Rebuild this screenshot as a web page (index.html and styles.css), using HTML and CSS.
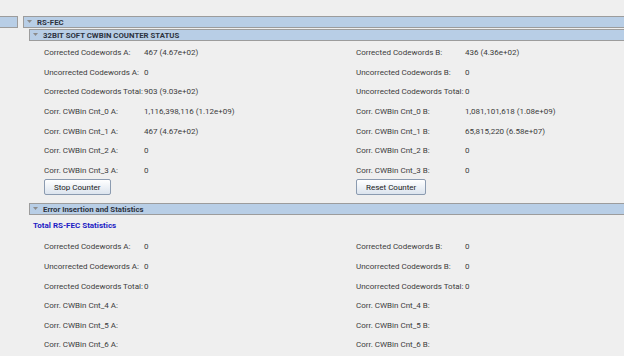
FILE: index.html
```html
<!DOCTYPE html>
<html lang="en">
<head>
    <meta charset="UTF-8">
    <title>RS-FEC</title>
    <link rel="stylesheet" href="styles.css">
</head>
<body>
    <div class="panelRow">
        <div class="stub"></div>
        <div class="panel">
            <div class="header">
                <svg class="arrow" width="5" height="3" viewBox="0 0 5 3"><polygon points="0,0 5,0 2.5,3" fill="#8c8c8c"/></svg>
                <span>RS-FEC</span>
            </div>

            <div class="section">
                <div class="header">
                    <svg class="arrow" width="5" height="3" viewBox="0 0 5 3"><polygon points="0,0 5,0 2.5,3" fill="#8c8c8c"/></svg>
                    <span>32BIT SOFT CWBIN COUNTER STATUS</span>
                </div>
                <div class="columns">
                    <div class="column">
                        <div class="grid left">
                            <div>Corrected Codewords A:</div><div>467 (4.67e+02)</div>
                            <div>Uncorrected Codewords A:</div><div>0</div>
                            <div>Corrected Codewords Total:</div><div>903 (9.03e+02)</div>
                            <div>Corr. CWBin Cnt_0 A:</div><div>1,116,398,116 (1.12e+09)</div>
                            <div>Corr. CWBin Cnt_1 A:</div><div>467 (4.67e+02)</div>
                            <div>Corr. CWBin Cnt_2 A:</div><div>0</div>
                            <div>Corr. CWBin Cnt_3 A:</div><div>0</div>
                        </div>
                        <button class="counterButton">Stop Counter</button>
                    </div>
                    <div class="column">
                        <div class="grid right">
                            <div>Corrected Codewords B:</div><div>436 (4.36e+02)</div>
                            <div>Uncorrected Codewords B:</div><div>0</div>
                            <div>Uncorrected Codewords Total:</div><div>0</div>
                            <div>Corr. CWBin Cnt_0 B:</div><div>1,081,101,618 (1.08e+09)</div>
                            <div>Corr. CWBin Cnt_1 B:</div><div>65,815,220 (6.58e+07)</div>
                            <div>Corr. CWBin Cnt_2 B:</div><div>0</div>
                            <div>Corr. CWBin Cnt_3 B:</div><div>0</div>
                        </div>
                        <button class="counterButton">Reset Counter</button>
                    </div>
                </div>
            </div>

            <div class="section errors">
                <div class="header">
                    <svg class="arrow" width="5" height="3" viewBox="0 0 5 3"><polygon points="0,0 5,0 2.5,3" fill="#8c8c8c"/></svg>
                    <span>Error Insertion and Statistics</span>
                </div>
                <div class="totalTitle">Total RS-FEC Statistics</div>
                <div class="columns">
                    <div class="column">
                        <div class="grid left">
                            <div>Corrected Codewords A:</div><div>0</div>
                            <div>Uncorrected Codewords A:</div><div>0</div>
                            <div>Corrected Codewords Total:</div><div>0</div>
                            <div>Corr. CWBin Cnt_4 A:</div><div></div>
                            <div>Corr. CWBin Cnt_5 A:</div><div></div>
                            <div>Corr. CWBin Cnt_6 A:</div><div></div>
                        </div>
                    </div>
                    <div class="column">
                        <div class="grid right">
                            <div>Corrected Codewords B:</div><div>0</div>
                            <div>Uncorrected Codewords B:</div><div>0</div>
                            <div>Uncorrected Codewords Total:</div><div>0</div>
                            <div>Corr. CWBin Cnt_4 B:</div><div></div>
                            <div>Corr. CWBin Cnt_5 B:</div><div></div>
                            <div>Corr. CWBin Cnt_6 B:</div><div></div>
                        </div>
                    </div>
                </div>
            </div>
        </div>
    </div>
</body>
</html>
```

FILE: styles.css
```css
* {
    margin: 0;
    padding: 0;
    box-sizing: border-box;
}
body {
    background-color: #efefef;
    font-family: Roboto, "Liberation Sans", sans-serif;
    font-size: 8px;
    color: #3c3c3c;
    overflow: hidden;
}
.panelRow {
    display: flex;
    gap: 5px;
    padding-top: 16px;
}
.stub {
    flex: none;
    width: 18px;
    height: 12px;
    background-color: #b8cee6;
    border: 1px solid #9c9c9c;
    border-left: none;
}
.panel {
    flex: 1;
    min-width: 0;
}
.header {
    display: flex;
    align-items: center;
    gap: 5px;
    height: 12px;
    padding-left: 3px;
    background-color: #b8cee6;
    border: 1px solid #9c9c9c;
    border-right: none;
    font-weight: bold;
    font-size: 7.8px;
    color: #2d3340;
}
.arrow {
    margin-top: -1px;
}
.section {
    margin-left: 6px;
    margin-top: 1px;
}
.columns {
    display: flex;
    padding-left: 15px;
}
.column {
    flex: none;
    width: 312px;
}
.column:last-child {
    flex: 1;
    min-width: 0;
}
.grid {
    display: grid;
    grid-auto-rows: 19.6px;
    align-items: center;
    padding-top: 2px;
}
.grid.left {
    grid-template-columns: 100px 1fr;
}
.grid.right {
    grid-template-columns: 109px 1fr;
}
.counterButton {
    display: block;
    height: 16px;
    padding: 0 9px;
    margin-top: -1px;
    font-family: inherit;
    font-size: 8px;
    color: #222;
    background: linear-gradient(#ffffff, #dce4ee);
    border: 1px solid #8b9bb0;
    border-radius: 2px;
}
.errors {
    margin-top: 8px;
}
.totalTitle {
    height: 20px;
    line-height: 21px;
    padding-left: 4px;
    font-weight: bold;
    color: #1c1cc4;
}
```
